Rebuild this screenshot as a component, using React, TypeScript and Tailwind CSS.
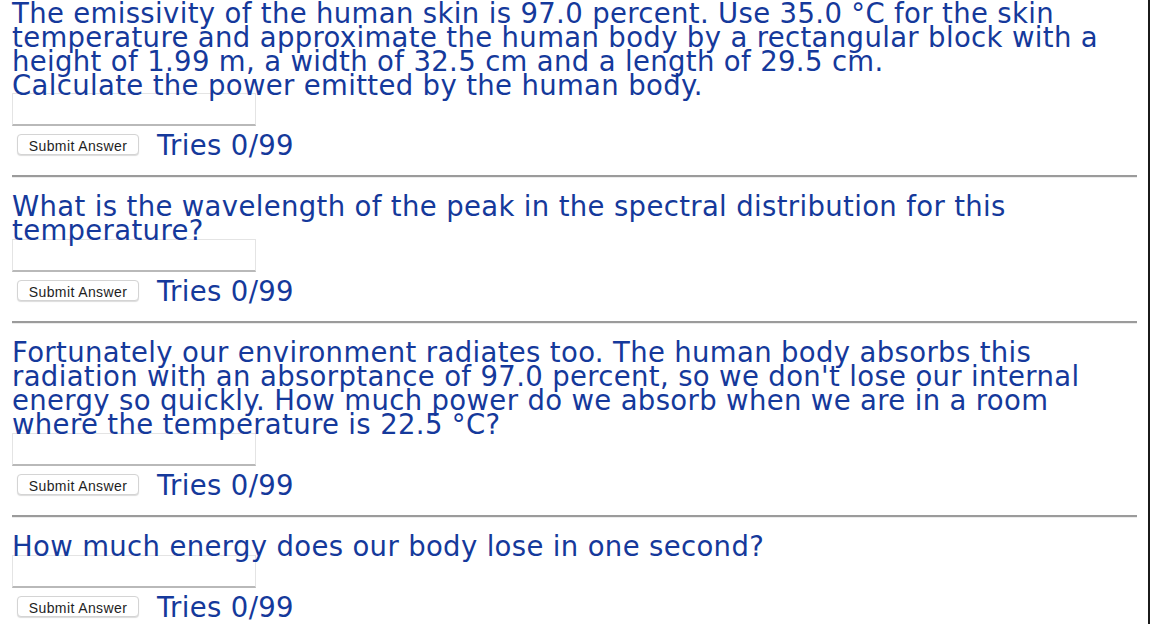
import React from "react";

const blue = "text-[#15399b]";
const q = `text-[27.5px] leading-[24px] tracking-[0.35px] ${blue}`;

function Line({ children }: { children: React.ReactNode }) {
  return <span className="block whitespace-nowrap">{children}</span>;
}

function AnswerBox({ last }: { last?: boolean }) {
  return (
    <>
      <input
        type="text"
        className="block w-[244px] h-[33px] border border-[#e4e4e4] border-b-2 border-b-[#b9b9b9] bg-white outline-none"
      />
      <div className="flex items-center mt-2 h-[21px]">
        <button className="ml-[5px] w-[122px] h-[21px] bg-white border border-[#d4d4d4] rounded-[4px] shadow-[0_1px_1px_rgba(0,0,0,0.14)] text-[14px] tracking-[0.4px] text-[#1e1e1e] font-['Liberation_Sans',Arial,sans-serif] leading-none pt-[3px]">
          Submit Answer
        </button>
        <span className={`ml-[18px] ${q} tracking-[0.7px] whitespace-nowrap`}>Tries 0/99</span>
      </div>
      {!last && (
        <div className="mt-5">
          <div className="h-[2px] bg-[#9b9b9b]" />
          <div className="h-px bg-[#ececec]" />
        </div>
      )}
    </>
  );
}

export default function App() {
  return (
    <div className="w-[1150px] h-[624px] overflow-hidden bg-white border-r-2 border-[#1b1b1b] pl-3 pr-[11px] font-['DejaVu_Sans',Verdana,sans-serif]">
      <p className={`${q} -mt-[3px] pt-[4px] -mb-[4px]`}>
        <Line>The emissivity of the human skin is 97.0 percent. Use 35.0 °C for the skin</Line>
        <Line>temperature and approximate the human body by a rectangular block with a</Line>
        <Line>height of 1.99 m, a width of 32.5 cm and a length of 29.5 cm.</Line>
        <Line>Calculate the power emitted by the human body.</Line>
      </p>
      <AnswerBox />

      <p className={`${q} mt-[13px] pt-[3px] -mb-[3px]`}>
        <Line>What is the wavelength of the peak in the spectral distribution for this</Line>
        <Line>temperature?</Line>
      </p>
      <AnswerBox />

      <p className={`${q} mt-[13px] pt-[3px] -mb-[3px]`}>
        <Line>Fortunately our environment radiates too. The human body absorbs this</Line>
        <Line>radiation with an absorptance of 97.0 percent, so we don't lose our internal</Line>
        <Line>energy so quickly. How much power do we absorb when we are in a room</Line>
        <Line>where the temperature is 22.5 °C?</Line>
      </p>
      <AnswerBox />

      <p className={`${q} mt-[13px] pt-[3px] -mb-[3px]`}>
        <Line>How much energy does our body lose in one second?</Line>
      </p>
      <AnswerBox last />
    </div>
  );
}
